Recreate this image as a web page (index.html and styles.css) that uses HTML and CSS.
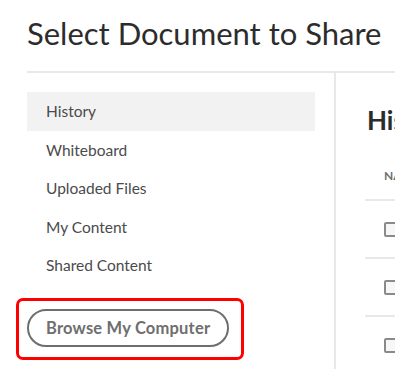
FILE: index.html
```html
<!DOCTYPE html>
<html lang="en">
<head>
    <meta charset="UTF-8">
    <meta name="viewport" content="width=device-width, initial-scale=1.0">
    <title>Select Document to Share</title>
    <link rel="stylesheet" href="styles.css">
</head>
<body>
    <div class="dialog">
        <div class="dialog-header">
            <h1 class="dialog-title">Select Document to Share</h1>
        </div>
        <div class="dialog-body">
            <div class="sidebar">
                <ul class="nav">
                    <li class="nav-item selected">History</li>
                    <li class="nav-item">Whiteboard</li>
                    <li class="nav-item">Uploaded Files</li>
                    <li class="nav-item">My Content</li>
                    <li class="nav-item">Shared Content</li>
                </ul>
                <div class="highlight">
                    <button class="browse-btn">Browse My Computer</button>
                </div>
            </div>
            <div class="content">
                <h2 class="content-title">History</h2>
                <div class="table">
                    <div class="table-head">
                        <span class="col-check">Name</span>
                        <span class="col-date">Date Modified</span>
                    </div>
                    <div class="table-row"><span class="col-check"><span class="checkbox"></span></span></div>
                    <div class="table-row"><span class="col-check"><span class="checkbox"></span></span></div>
                    <div class="table-row"><span class="col-check"><span class="checkbox"></span></span></div>
                </div>
            </div>
        </div>
    </div>
</body>
</html>
```

FILE: styles.css
```css
html, body {
    margin: 0;
    background: #fff;
    overflow: hidden;
}
body {
    font-family: Lato, "Open Sans", sans-serif;
    width: 395px;
    height: 369px;
}
.dialog {
    padding-left: 27px;
}
.dialog-header {
    padding-top: 13px;
    padding-bottom: 18px;
    border-bottom: 2px solid #e8e8e8;
}
.dialog-title {
    margin: 0;
    font-size: 31px;
    line-height: 40px;
    font-weight: 400;
    color: #2c2c2c;
    white-space: nowrap;
}
.dialog-body {
    display: flex;
    height: 296px;
}
.sidebar {
    width: 307px;
    flex-shrink: 0;
    padding-top: 19px;
    border-right: 2px solid #e8e8e8;
}
.nav {
    list-style: none;
    margin: 0;
    padding: 0;
    width: 288px;
}
.nav-item {
    height: 38.5px;
    line-height: 38.5px;
    padding-left: 19px;
    font-size: 15.5px;
    color: #4b4b4b;
}
.nav-item.selected {
    background-color: #f2f2f2;
}
.highlight {
    display: inline-block;
    margin: 13px 0 0 -11px;
    padding: 8px 12px 10px 8px;
    border: 3px solid #f00;
    border-radius: 7px;
}
.browse-btn {
    display: block;
    height: 38px;
    padding: 0 17px;
    border: 2px solid #6e6e6e;
    border-radius: 19px;
    background: #fff;
    font-family: inherit;
    font-size: 16.5px;
    letter-spacing: 0.2px;
    font-weight: 700;
    color: #6e6e6e;
    white-space: nowrap;
}
.content {
    flex: 1;
    min-width: 0;
    overflow: hidden;
    padding-left: 29px;
}
.content-title {
    margin: 32px 0 0 2px;
    font-size: 26px;
    line-height: 30px;
    font-weight: 700;
    color: #2c2c2c;
    white-space: nowrap;
}
.table {
    width: 400px;
    margin-top: 35px;
}
.table-head {
    display: flex;
    height: 29px;
    border-bottom: 2px solid #e8e8e8;
    font-size: 12px;
    line-height: 12px;
    font-weight: 700;
    text-transform: uppercase;
    color: #6e6e6e;
}
.table-row {
    display: flex;
    align-items: center;
    height: 56px;
    border-bottom: 2px solid #e8e8e8;
}
.col-check {
    width: 120px;
    padding-left: 19px;
    white-space: nowrap;
}
.checkbox {
    display: block;
    width: 11px;
    height: 11px;
    border: 2px solid #8a8a8a;
    border-radius: 2px;
    background: #f7f7f7;
}
```
